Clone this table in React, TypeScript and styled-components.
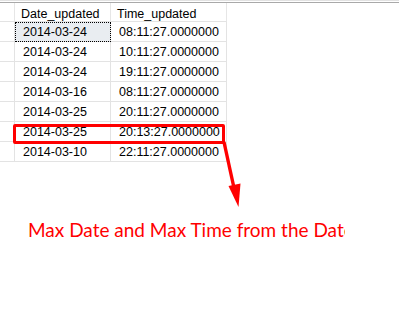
import React from "react";
import styled, { createGlobalStyle } from "styled-components";

const GlobalStyle = createGlobalStyle`
  html, body {
    margin: 0;
    padding: 0;
    background: #ffffff;
  }
  body {
    width: 399px;
    height: 330px;
    overflow: hidden;
  }
`;

const StyledPage = styled.div`
  position: relative;
  width: 399px;
  height: 330px;
  background: #fff;
`;

const TopEdge = styled.div`
  height: 1px;
  border-top: 1px solid #e2e2e2;
  border-bottom: 1px solid #a9a9a9;
`;

const Grid = styled.div`
  display: grid;
  grid-template-columns: 15px 96px 116px;
  grid-template-rows: 19px;
  grid-auto-rows: 20px;
  width: 227px;
  font-family: "Liberation Sans", Arial, sans-serif;
  font-size: 12.5px;
  color: #000;
`;

const Cell = styled.div<{ $selected?: boolean; $header?: boolean }>`
  box-sizing: border-box;
  border-right: 1px solid ${(p) => (p.$header ? "#e6e6e6" : "#e3e3e3")};
  border-bottom: 1px solid #e3e3e3;
  padding: ${(p) => (p.$header ? "2px 0 0 6px" : "1px 0 0 8px")};
  line-height: 18px;
  white-space: nowrap;
  overflow: hidden;
  background: ${(p) => (p.$selected ? "#e9edf1" : "#fff")};
  outline: ${(p) => (p.$selected ? "1px dotted #000" : "none")};
  outline-offset: -1px;
`;

const Highlight = styled.div`
  position: absolute;
  left: 13px;
  top: 124px;
  width: 212px;
  height: 19.5px;
  box-sizing: border-box;
  border: 3.5px solid #ff0000;
  border-radius: 2px;
  pointer-events: none;
`;

const ArrowLayer = styled.svg`
  position: absolute;
  left: 0;
  top: 0;
  pointer-events: none;
`;

const Caption = styled.div`
  margin-top: 56px;
  width: 345px;
  padding-left: 28px;
  box-sizing: border-box;
  overflow: hidden;
  white-space: nowrap;
  font-family: Lato, "Open Sans", sans-serif;
  font-size: 19px;
  line-height: 23px;
  color: #ff0000;
`;

const rows = [
  ["2014-03-24", "08:11:27.0000000"],
  ["2014-03-24", "10:11:27.0000000"],
  ["2014-03-24", "19:11:27.0000000"],
  ["2014-03-16", "08:11:27.0000000"],
  ["2014-03-25", "20:11:27.0000000"],
  ["2014-03-25", "20:13:27.0000000"],
  ["2014-03-10", "22:11:27.0000000"],
];

const App = () => {
  return (
    <StyledPage>
      <GlobalStyle />
      <TopEdge />
      <Grid>
        <Cell $header />
        <Cell $header>Date_updated</Cell>
        <Cell $header>Time_updated</Cell>
        {rows.map(([d, t], i) => (
          <React.Fragment key={i}>
            <Cell />
            <Cell $selected={i === 0}>{d}</Cell>
            <Cell>{t}</Cell>
          </React.Fragment>
        ))}
      </Grid>
      <Caption>Max Date and Max Time from the Date</Caption>

      <Highlight />
      <ArrowLayer width="399" height="330" viewBox="0 0 399 330">
        <line x1="224" y1="142" x2="234" y2="188" stroke="#ff0000" strokeWidth="3.4" />
        <polygon points="228.5,186 240.5,183.5 238.5,207" fill="#ff0000" />
      </ArrowLayer>
    </StyledPage>
  );
};

export default App;
